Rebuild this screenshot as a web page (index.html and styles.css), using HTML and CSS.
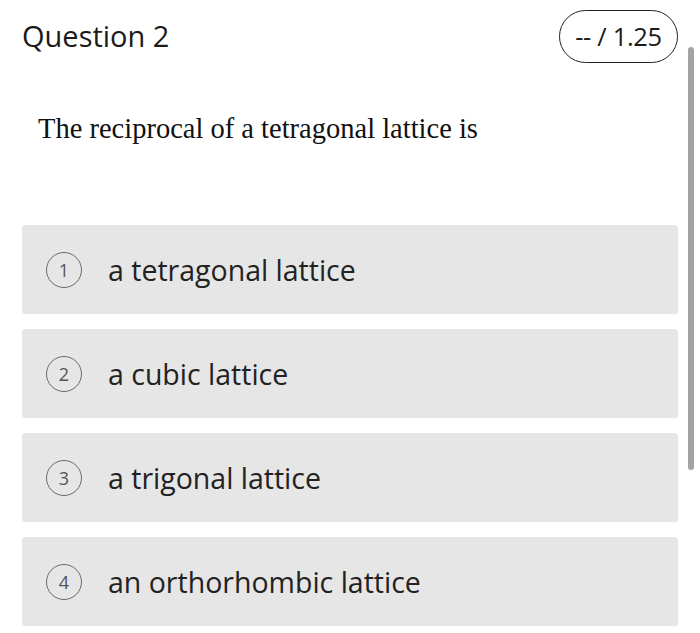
FILE: index.html
```html
<!DOCTYPE html>
<html>
<head>
<meta charset="utf-8">
<link rel="stylesheet" href="styles.css">
</head>
<body>
<div class="page">
  <div class="content">
    <header class="head">
      <h1 class="title">Question 2</h1>
      <div class="score">-- / 1.25</div>
    </header>
    <p class="prompt">The reciprocal of a tetragonal lattice is</p>
    <ul class="options">
      <li class="option"><span class="num">1</span><span class="label">a tetragonal lattice</span></li>
      <li class="option"><span class="num">2</span><span class="label">a cubic lattice</span></li>
      <li class="option"><span class="num">3</span><span class="label">a trigonal lattice</span></li>
      <li class="option"><span class="num">4</span><span class="label">an orthorhombic lattice</span></li>
    </ul>
  </div>
  <div class="scrolltrack"><div class="scrollthumb"></div></div>
</div>
</body>
</html>
```

FILE: styles.css
```css
* { box-sizing: border-box; }
html, body { margin: 0; padding: 0; background: #fff; }
body { font-family: "Open Sans", "Liberation Sans", sans-serif; color: #1a1a1a; }
.page { display: flex; width: 700px; height: 633px; overflow: hidden; }
.content { width: 678px; padding-left: 22px; }
.head { display: flex; justify-content: space-between; align-items: center; height: 74px; padding-bottom: 2px; }
.title { margin: 0; font-size: 29px; line-height: 36px; font-weight: 400; color: #1a1a1a; }
.score {
  border: 1.5px solid #222; border-radius: 27px;
  height: 53px; width: 119px;
  display: flex; align-items: center; justify-content: center;
  font-size: 25.5px; letter-spacing: -0.3px; color: #1a1a1a;
}
.prompt {
  margin: 38px 0 0 16px;
  font-family: "Liberation Serif", "Times New Roman", serif;
  font-size: 28.5px; line-height: 34px; color: #111;
}
.options { list-style: none; margin: 79px 0 0 0; padding: 0; display: flex; flex-direction: column; gap: 15px; }
.option {
  height: 89px; background: #e6e6e6; border-radius: 3px;
  display: flex; align-items: center; padding-left: 24px;
}
.num {
  width: 36px; height: 36px; border: 1.5px solid #6a6a6a; border-radius: 50%;
  display: flex; align-items: center; justify-content: center;
  font-size: 18px; color: #555; flex: none;
}
.label { margin-left: 26px; font-size: 28.5px; color: #222; }
.scrolltrack { flex: none; width: 22px; padding: 47px 0 0 10px; }
.scrollthumb { width: 6px; height: 423px; background: #a3a3a3; border-radius: 3px; }
```
